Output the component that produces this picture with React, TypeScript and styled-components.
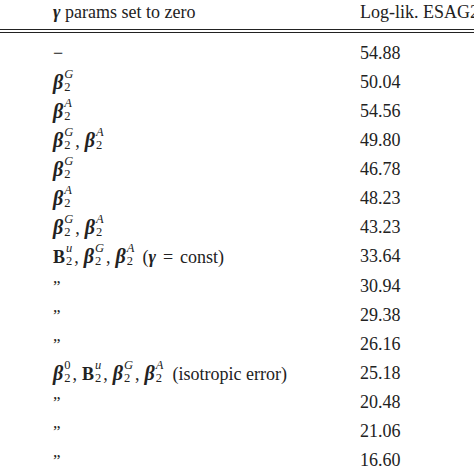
import React from "react";
import styled, { createGlobalStyle } from "styled-components";

const GlobalStyle = createGlobalStyle`
  body {
    margin: 0;
    background: #ffffff;
    color: #222222;
    font-family: "Liberation Serif", "Times New Roman", serif;
    font-size: 18px;
  }
`;

const Page = styled.div`
  width: 474px;
  height: 474px;
  overflow: hidden;
  background: #ffffff;
`;

const Header = styled.div`
  display: grid;
  grid-template-columns: 307px 1fr;
  box-sizing: border-box;
  height: 33px;
  padding: 0 0 5px 53px;
  align-items: center;
  border-bottom: 4px double #222222;
  white-space: nowrap;
`;

const Body = styled.div`
  display: grid;
  grid-template-columns: 307px 1fr;
  grid-auto-rows: 29.07px;
  padding: 6px 0 0 53px;
  white-space: nowrap;
`;

const Cell = styled.div`
  line-height: 29px;
`;

const Sym = styled.span<{ $big?: boolean }>`
  font-weight: bold;
  font-style: italic;
  font-size: ${(p) => (p.$big ? "20px" : "inherit")};
`;

const Upright = styled.span`
  font-weight: bold;
`;

const Scripts = styled.span`
  display: inline-flex;
  flex-direction: column;
  vertical-align: 11px;
  font-size: 12.5px;
  line-height: 13px;
  margin: 0 2px 0 1px;
`;

const Script = styled.span<{ $italic?: boolean }>`
  font-style: ${(p) => (p.$italic ? "italic" : "normal")};
`;

const Ditto = styled.span`
  font-size: 17px;
`;

const Gap = styled.span<{ $w: number }>`
  display: inline-block;
  width: ${(p) => p.$w}px;
`;

type Term = { base: "beta" | "B"; sup: string; italic?: boolean };

const Symbol = ({ t }: { t: Term }) => (
  <>
    {t.base === "beta" ? <Sym $big>β</Sym> : <Upright>B</Upright>}
    <Scripts>
      <Script $italic={t.italic}>{t.sup}</Script>
      <Script>2</Script>
    </Scripts>
  </>
);

const Terms = ({ list }: { list: Term[] }) => (
  <>
    {list.map((t, i) => (
      <React.Fragment key={i}>
        {i > 0 && (
          <>
            ,<Gap $w={5} />
          </>
        )}
        <Symbol t={t} />
      </React.Fragment>
    ))}
  </>
);

const G: Term = { base: "beta", sup: "G", italic: true };
const A: Term = { base: "beta", sup: "A", italic: true };
const U: Term = { base: "B", sup: "u", italic: true };
const Z: Term = { base: "beta", sup: "0" };

const ditto = <Ditto>”</Ditto>;

const rows: { label: React.ReactNode; value: string }[] = [
  { label: "−", value: "54.88" },
  { label: <Terms list={[G]} />, value: "50.04" },
  { label: <Terms list={[A]} />, value: "54.56" },
  { label: <Terms list={[G, A]} />, value: "49.80" },
  { label: <Terms list={[G]} />, value: "46.78" },
  { label: <Terms list={[A]} />, value: "48.23" },
  { label: <Terms list={[G, A]} />, value: "43.23" },
  {
    label: (
      <>
        <Terms list={[U, G, A]} />
        <Gap $w={6} />
        (<Sym>γ</Sym>
        <Gap $w={7} />=<Gap $w={7} />
        const)
      </>
    ),
    value: "33.64",
  },
  { label: ditto, value: "30.94" },
  { label: ditto, value: "29.38" },
  { label: ditto, value: "26.16" },
  {
    label: (
      <>
        <Terms list={[Z, U, G, A]} />
        <Gap $w={7} />
        (isotropic error)
      </>
    ),
    value: "25.18",
  },
  { label: ditto, value: "20.48" },
  { label: ditto, value: "21.06" },
  { label: ditto, value: "16.60" },
];

export default function App() {
  return (
    <Page>
      <GlobalStyle />
      <Header>
        <div>
          <Sym>γ</Sym> params set to zero
        </div>
        <div>Log-lik. ESAG2</div>
      </Header>
      <Body>
        {rows.map((r, i) => (
          <React.Fragment key={i}>
            <Cell>{r.label}</Cell>
            <Cell>{r.value}</Cell>
          </React.Fragment>
        ))}
      </Body>
    </Page>
  );
}
